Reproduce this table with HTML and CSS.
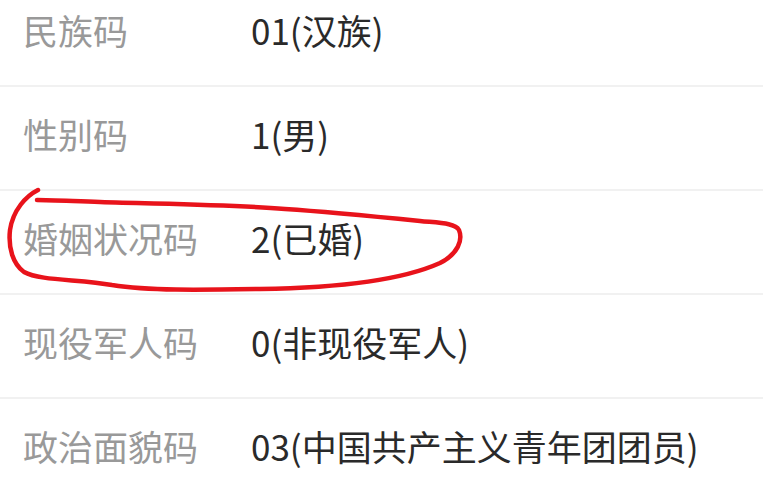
FILE: index.html
```html
<!DOCTYPE html>
<html lang="zh-CN">
<head>
<meta charset="utf-8">
<title>信息</title>
<link rel="stylesheet" href="styles.css">
</head>
<body>
<div class="page">
  <div class="list">
    <div class="row"><span class="label">民族码</span><span class="value">01(汉族)</span></div>
    <div class="row"><span class="label">性别码</span><span class="value">1(男)</span></div>
    <div class="row"><span class="label">婚姻状况码</span><span class="value">2(已婚)</span></div>
    <div class="row"><span class="label">现役军人码</span><span class="value">0(非现役军人)</span></div>
    <div class="row"><span class="label">政治面貌码</span><span class="value">03(中国共产主义青年团团员)</span></div>
  </div>
  <svg class="mark" width="763" height="490" viewBox="0 0 763 490" xmlns="http://www.w3.org/2000/svg">
    <path d="M38,190 C26,196 13,210 10,230 C8,248 13,264 24,272 C40,281 80,279 112,285 C150,291 200,290 260,289 C330,288 400,281 440,263 C458,254 463,240 459,230 C455,223 440,223 420,221 C380,217 330,212 285,209 C225,204 160,204 100,202 C70,201 50,200 37,200"
          fill="none" stroke="#e8131b" stroke-width="4.5" stroke-linecap="round" stroke-linejoin="round"/>
  </svg>
</div>
</body>
</html>
```

FILE: styles.css
```css
html, body {
  margin: 0;
  padding: 0;
  background: #ffffff;
}

.page {
  position: relative;
  width: 763px;
  height: 490px;
  overflow: hidden;
}

.list {
  margin-top: -17px;
  display: flex;
  flex-direction: column;
}

.row {
  display: flex;
  align-items: center;
  box-sizing: border-box;
  height: 104px;
  padding: 0 0 10px 23px;
  border-bottom: 2px solid #f1f1f1;
  font-family: "Noto Sans CJK SC", "Noto Sans", sans-serif;
  font-size: 35px;
  line-height: 1;
}

.label {
  width: 228px;
  flex: none;
  color: #999999;
}

.value {
  color: #2a2a2a;
  white-space: nowrap;
}

.mark {
  position: absolute;
  left: 0;
  top: 0;
  pointer-events: none;
}
```
